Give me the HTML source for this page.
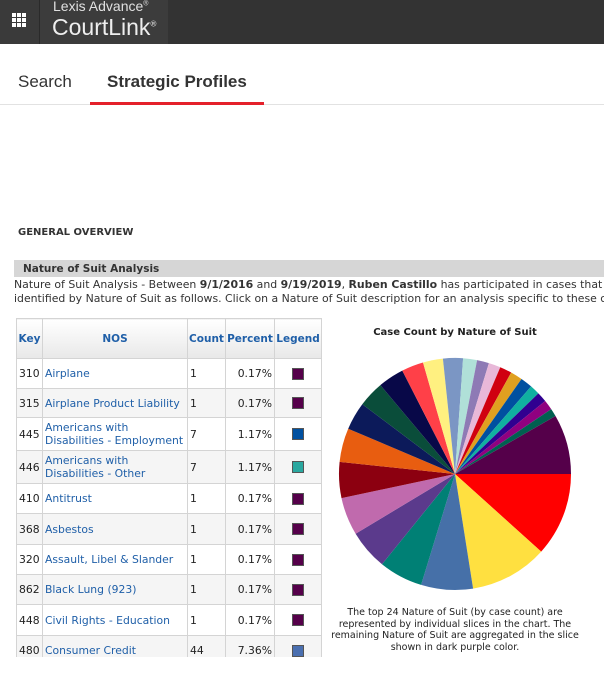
<!DOCTYPE html>
<html><head><meta charset="utf-8"><style>
*{margin:0;padding:0;box-sizing:border-box}
body{width:604px;height:696px;overflow:hidden;background:#fff;font-family:"DejaVu Sans",Verdana,sans-serif;position:relative;color:#222}
.hdr{position:absolute;left:0;top:0;width:604px;height:44px;background:#333}
.ic{position:absolute;left:0;top:0;width:40px;height:44px;background:#3a3a3a;border-right:1px solid #2a2a2a}
.logo{position:absolute;left:40px;top:0;width:128px;height:44px;background:#3c3c3c}
.l1{position:absolute;left:13px;top:-2px;color:#e0e0e0;font:14px "Liberation Sans",sans-serif}
.l2{position:absolute;left:12px;top:14px;color:#eee;font:23px "Liberation Sans",sans-serif}
.tab{position:absolute;top:72px;font:17px "Liberation Sans",sans-serif;color:#333}
.abs{position:absolute}
table{position:absolute;left:16px;top:318px;border-collapse:collapse;font-size:10.8px;width:305px;table-layout:fixed}
td,th{border:1px solid #d4d4d4;padding:0 2px}
th{background:linear-gradient(#fff,#e8e8e8);color:#1f5fa8;height:40px;font-weight:bold;font-size:10.5px;padding:0 1px}
td a{color:#1f5fa8;text-decoration:none}
td{white-space:nowrap;overflow:hidden}
tr:nth-child(odd) td{background:#f5f5f5}
.p{text-align:right}
.sq{display:block;margin:0 auto;width:12px;height:12px;border:1px solid #555}
</style></head><body>
<div class="hdr"><div class="ic">
<svg width="40" height="44"><g fill="#fff"><rect x="12" y="13" width="4" height="4"/><rect x="17" y="13" width="4" height="4"/><rect x="22" y="13" width="4" height="4"/><rect x="12" y="18" width="4" height="4"/><rect x="17" y="18" width="4" height="4"/><rect x="22" y="18" width="4" height="4"/><rect x="12" y="23" width="4" height="4"/><rect x="17" y="23" width="4" height="4"/><rect x="22" y="23" width="4" height="4"/></g></svg></div>
<div class="logo"><div class="l1">Lexis Advance<sup style="font-size:7px">®</sup></div><div class="l2">CourtLink<sup style="font-size:8px">®</sup></div></div></div>
<div class="tab" style="left:18px">Search</div>
<div class="tab" style="left:107px;font-weight:bold">Strategic Profiles</div>
<div class="abs" style="left:0;top:104px;width:604px;height:1px;background:#e2e2e2"></div>
<div class="abs" style="left:90px;top:102px;width:174px;height:3px;background:#e4202a"></div>
<div class="abs" style="left:18px;top:227px;font-size:10px;font-weight:bold;color:#333">GENERAL OVERVIEW</div>
<div class="abs" style="left:14px;top:260px;width:600px;height:17px;background:#d6d6d6;font-size:10.5px;font-weight:bold;padding:3px 9px;color:#333">Nature of Suit Analysis</div>
<div class="abs" style="left:14px;top:278px;width:680px;font-size:10.9px;line-height:14px;white-space:nowrap;color:#333">Nature of Suit Analysis - Between <b>9/1/2016</b> and <b>9/19/2019</b>, <b>Ruben Castillo</b> has participated in cases that<br>identified by Nature of Suit as follows. Click on a Nature of Suit description for an analysis specific to these cases.</div>
<table>
<colgroup><col style="width:26px"><col style="width:145px"><col style="width:38px"><col style="width:49px"><col style="width:47px"></colgroup>
<tr><th>Key</th><th>NOS</th><th>Count</th><th>Percent</th><th>Legend</th></tr>
<tr style="height:30px"><td>310</td><td><a>Airplane</a></td><td>1</td><td class="p">0.17%</td><td><i class="sq" style="background:#55004a"></i></td></tr>
<tr style="height:29px"><td>315</td><td><a>Airplane Product Liability</a></td><td>1</td><td class="p">0.17%</td><td><i class="sq" style="background:#55004a"></i></td></tr>
<tr style="height:33px"><td>445</td><td style="line-height:13px"><a>Americans with<br>Disabilities - Employment</a></td><td>7</td><td class="p">1.17%</td><td><i class="sq" style="background:#0050a0"></i></td></tr>
<tr style="height:33px"><td>446</td><td style="line-height:13px"><a>Americans with<br>Disabilities - Other</a></td><td>7</td><td class="p">1.17%</td><td><i class="sq" style="background:#2aa8a0"></i></td></tr>
<tr style="height:30px"><td>410</td><td><a>Antitrust</a></td><td>1</td><td class="p">0.17%</td><td><i class="sq" style="background:#55004a"></i></td></tr>
<tr style="height:31px"><td>368</td><td><a>Asbestos</a></td><td>1</td><td class="p">0.17%</td><td><i class="sq" style="background:#55004a"></i></td></tr>
<tr style="height:30px"><td>320</td><td><a>Assault, Libel &amp; Slander</a></td><td>1</td><td class="p">0.17%</td><td><i class="sq" style="background:#55004a"></i></td></tr>
<tr style="height:30px"><td>862</td><td><a>Black Lung (923)</a></td><td>1</td><td class="p">0.17%</td><td><i class="sq" style="background:#55004a"></i></td></tr>
<tr style="height:31px"><td>448</td><td><a>Civil Rights - Education</a></td><td>1</td><td class="p">0.17%</td><td><i class="sq" style="background:#55004a"></i></td></tr>
<tr style="height:30px"><td>480</td><td><a>Consumer Credit</a></td><td>44</td><td class="p">7.36%</td><td><i class="sq" style="background:#4a6fb0"></i></td></tr>
</table>
<div class="abs" style="left:0;top:657px;width:604px;height:40px;background:#fff"></div>
<div class="abs" style="left:330px;top:327px;width:250px;text-align:center;font-size:10px;font-weight:bold;color:#222">Case Count by Nature of Suit</div>
<svg class="abs" style="left:0;top:0" width="604" height="696">
<g stroke="none">
<path d="M455 474L571 474A116 116 0 0 1 541.2 551.6Z" fill="#ff0000"/>
<path d="M455 474L541.2 551.6A116 116 0 0 1 473.1 588.6Z" fill="#ffe040"/>
<path d="M455 474L473.1 588.6A116 116 0 0 1 421.1 584.9Z" fill="#4670a8"/>
<path d="M455 474L421.1 584.9A116 116 0 0 1 382 564.2Z" fill="#008075"/>
<path d="M455 474L382 564.2A116 116 0 0 1 355.6 533.7Z" fill="#5b3a8c"/>
<path d="M455 474L355.6 533.7A116 116 0 0 1 341.5 498.1Z" fill="#c06aad"/>
<path d="M455 474L341.5 498.1A116 116 0 0 1 339.6 461.9Z" fill="#8c0010"/>
<path d="M455 474L339.6 461.9A116 116 0 0 1 348.2 428.7Z" fill="#e85d10"/>
<path d="M455 474L348.2 428.7A116 116 0 0 1 362.3 404.2Z" fill="#0c1a5a"/>
<path d="M455 474L362.3 404.2A116 116 0 0 1 380.4 385.1Z" fill="#0a4d3a"/>
<path d="M455 474L380.4 385.1A116 116 0 0 1 402.3 370.6Z" fill="#080848"/>
<path d="M455 474L402.3 370.6A116 116 0 0 1 423 362.5Z" fill="#ff4048"/>
<path d="M455 474L423 362.5A116 116 0 0 1 442.9 358.6Z" fill="#fff080"/>
<path d="M455 474L442.9 358.6A116 116 0 0 1 463.1 358.2Z" fill="#7b96c4"/>
<path d="M455 474L463.1 358.2A116 116 0 0 1 477.1 360.1Z" fill="#b0e0d8"/>
<path d="M455 474L477.1 360.1A116 116 0 0 1 488.9 363.1Z" fill="#8e7ab5"/>
<path d="M455 474L488.9 363.1A116 116 0 0 1 500.3 367.2Z" fill="#e8b8d8"/>
<path d="M455 474L500.3 367.2A116 116 0 0 1 511.2 372.5Z" fill="#d00010"/>
<path d="M455 474L511.2 372.5A116 116 0 0 1 521.5 379Z" fill="#e0a020"/>
<path d="M455 474L521.5 379A116 116 0 0 1 531.1 386.4Z" fill="#0050a0"/>
<path d="M455 474L531.1 386.4A116 116 0 0 1 538.4 393.4Z" fill="#10b0a0"/>
<path d="M455 474L538.4 393.4A116 116 0 0 1 545.2 401Z" fill="#300090"/>
<path d="M455 474L545.2 401A116 116 0 0 1 551.2 409.1Z" fill="#900080"/>
<path d="M455 474L551.2 409.1A116 116 0 0 1 555.5 416Z" fill="#006050"/>
<path d="M455 474L555.5 416A116 116 0 0 1 571 474Z" fill="#55004a"/>
</g></svg>
<div class="abs" style="left:330px;top:607px;width:250px;text-align:center;font-size:9.5px;line-height:11.5px;color:#222">The top 24 Nature of Suit (by case count) are represented by individual slices in the chart. The remaining Nature of Suit are aggregated in the slice shown in dark purple color.</div>
</body></html>
